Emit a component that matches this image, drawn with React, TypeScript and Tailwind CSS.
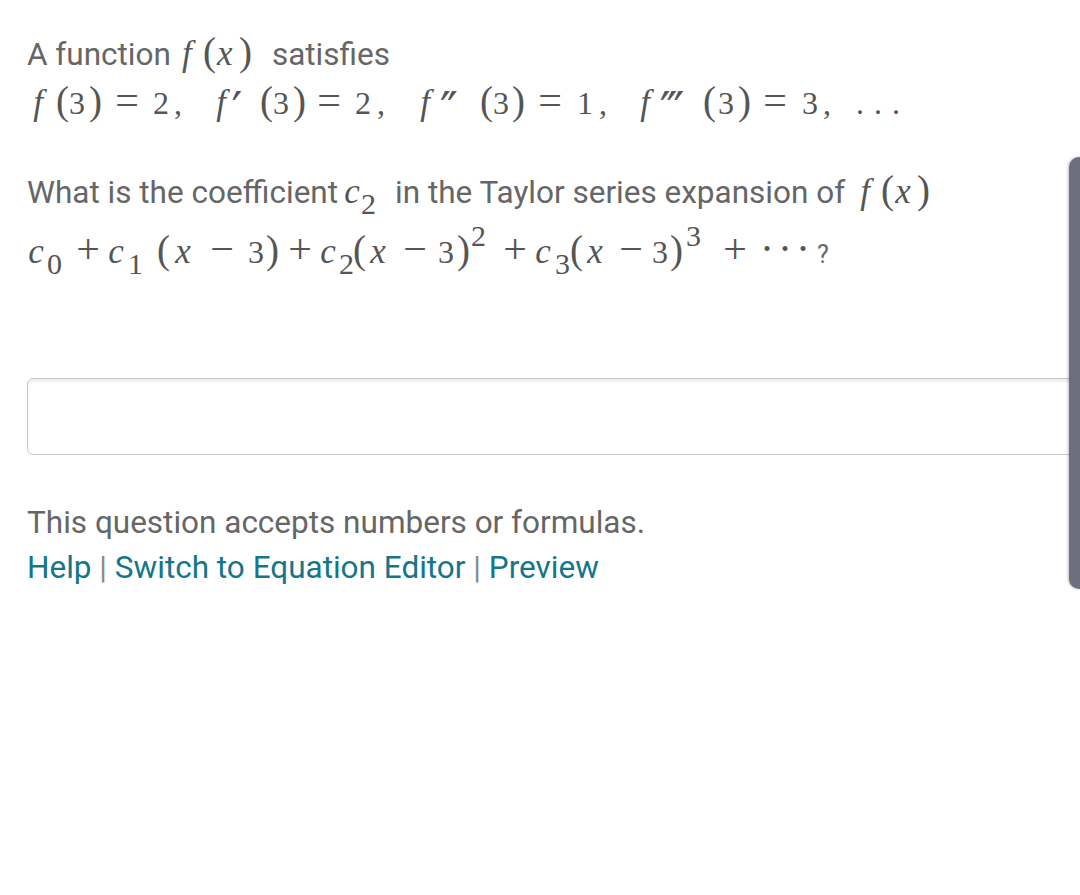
type Kind = 'v' | 'n' | 'pa' | 'o' | 'sub' | 'sup' | 'p' | 'q';

type Tok = { t: string; k: Kind; c: string };

const kindClass: Record<Kind, string> = {
  v: "italic font-['Liberation_Serif',serif] text-[35px] leading-[0px]",
  n: "font-['Liberation_Serif',serif] text-[32px]",
  pa: "font-['Liberation_Serif',serif] text-[39px] leading-[0px]",
  o: "font-['Liberation_Serif',serif] text-[42px] leading-[0px]",
  sub: "font-['Liberation_Serif',serif] text-[30px] relative top-[11px]",
  sup: "font-['Liberation_Serif',serif] text-[30px] relative top-[-17px]",
  p: "font-['DejaVu_Sans',sans-serif] text-[48px] leading-[0px] relative top-[12px] tracking-[-4px]",
  q: "font-['Roboto',sans-serif] text-[25px]",
};

function T({ tok }: { tok: Tok }) {
  return <span className={`inline-block text-center ${kindClass[tok.k]} ${tok.c}`}>{tok.t}</span>;
}

function Row({ toks }: { toks: Tok[] }) {
  return (
    <>
      {toks.map((tok, i) => (
        <T key={i} tok={tok} />
      ))}
    </>
  );
}

// f (3) = 2 , f′ (3) = 2 , f″ (3) = 1 , f‴ (3) = 3 , ...
const conditions: Tok[] = [
  { t: 'f', k: 'v', c: 'ml-[3px] w-[16px]' },
  { t: '(', k: 'pa', c: 'ml-[10px] w-[10px]' },
  { t: '3', k: 'n', c: 'ml-[3px] w-[16px]' },
  { t: ')', k: 'pa', c: 'ml-[4px] w-[10px]' },
  { t: '=', k: 'o', c: 'ml-[16px] w-[24px]' },
  { t: '2', k: 'n', c: 'ml-[14px] w-[16px]' },
  { t: ',', k: 'n', c: 'ml-[5px] w-[8px]' },
  { t: 'f', k: 'v', c: 'ml-[31px] w-[16px]' },
  { t: '′', k: 'p', c: 'ml-[1px] w-[10px]' },
  { t: '(', k: 'pa', c: 'ml-[20px] w-[10px]' },
  { t: '3', k: 'n', c: 'ml-[3px] w-[16px]' },
  { t: ')', k: 'pa', c: 'ml-[4px] w-[10px]' },
  { t: '=', k: 'o', c: 'ml-[14px] w-[24px]' },
  { t: '2', k: 'n', c: 'ml-[14px] w-[16px]' },
  { t: ',', k: 'n', c: 'ml-[6px] w-[8px]' },
  { t: 'f', k: 'v', c: 'ml-[32px] w-[16px]' },
  { t: '′′', k: 'p', c: 'ml-[4px] w-[20px]' },
  { t: '(', k: 'pa', c: 'ml-[23px] w-[10px]' },
  { t: '3', k: 'n', c: 'ml-[3px] w-[16px]' },
  { t: ')', k: 'pa', c: 'ml-[3px] w-[10px]' },
  { t: '=', k: 'o', c: 'ml-[16px] w-[24px]' },
  { t: '1', k: 'n', c: 'ml-[15px] w-[16px]' },
  { t: ',', k: 'n', c: 'ml-[6px] w-[8px]' },
  { t: 'f', k: 'v', c: 'ml-[30px] w-[16px]' },
  { t: '′′′', k: 'p', c: 'ml-[2px] w-[30px]' },
  { t: '(', k: 'pa', c: 'ml-[18px] w-[10px]' },
  { t: '3', k: 'n', c: 'ml-[5px] w-[16px]' },
  { t: ')', k: 'pa', c: 'ml-[4px] w-[10px]' },
  { t: '=', k: 'o', c: 'ml-[15px] w-[24px]' },
  { t: '3', k: 'n', c: 'ml-[15px] w-[16px]' },
  { t: ',', k: 'n', c: 'ml-[5px] w-[8px]' },
  { t: '. . .', k: 'n', c: 'ml-[25px] w-[40px] tracking-[1px]' },
];

// c0 + c1 (x − 3) + c2(x − 3)^2 + c3(x − 3)^3 + ··· ?
const series: Tok[] = [
  { t: 'c', k: 'v', c: 'ml-[1px] w-[16px]' },
  { t: '0', k: 'sub', c: 'ml-[3px] w-[14px]' },
  { t: '+', k: 'o', c: 'ml-[15px] w-[24px]' },
  { t: 'c', k: 'v', c: 'ml-[8px] w-[16px]' },
  { t: '1', k: 'sub', c: 'ml-[4px] w-[14px]' },
  { t: '(', k: 'pa', c: 'ml-[15px] w-[10px]' },
  { t: 'x', k: 'v', c: 'ml-[7px] w-[18px]' },
  { t: '−', k: 'o', c: 'ml-[18px] w-[24px]' },
  { t: '3', k: 'n', c: 'ml-[14px] w-[16px]' },
  { t: ')', k: 'pa', c: 'ml-[2px] w-[10px]' },
  { t: '+', k: 'o', c: 'ml-[12px] w-[24px]' },
  { t: 'c', k: 'v', c: 'ml-[8px] w-[16px]' },
  { t: '2', k: 'sub', c: 'ml-[3px] w-[14px]' },
  { t: '(', k: 'pa', c: 'ml-[0px] w-[10px]' },
  { t: 'x', k: 'v', c: 'ml-[6px] w-[18px]' },
  { t: '−', k: 'o', c: 'ml-[16px] w-[24px]' },
  { t: '3', k: 'n', c: 'ml-[11px] w-[16px]' },
  { t: ')', k: 'pa', c: 'ml-[3px] w-[10px]' },
  { t: '2', k: 'sup', c: 'ml-[4px] w-[14px]' },
  { t: '+', k: 'o', c: 'ml-[18px] w-[24px]' },
  { t: 'c', k: 'v', c: 'ml-[8px] w-[16px]' },
  { t: '3', k: 'sub', c: 'ml-[4px] w-[14px]' },
  { t: '(', k: 'pa', c: 'ml-[1px] w-[10px]' },
  { t: 'x', k: 'v', c: 'ml-[6px] w-[18px]' },
  { t: '−', k: 'o', c: 'ml-[15px] w-[24px]' },
  { t: '3', k: 'n', c: 'ml-[9px] w-[16px]' },
  { t: ')', k: 'pa', c: 'ml-[2px] w-[10px]' },
  { t: '3', k: 'sup', c: 'ml-[6px] w-[14px]' },
  { t: '+', k: 'o', c: 'ml-[23px] w-[24px]' },
  { t: '·', k: 'o', c: 'ml-[11px] w-[18px]' },
  { t: '·', k: 'o', c: 'w-[18px]' },
  { t: '·', k: 'o', c: 'w-[18px]' },
  { t: '?', k: 'q', c: 'ml-[4px] w-[14px] text-[#666666]' },
];

function Fx() {
  return (
    <>
      <T tok={{ t: 'f', k: 'v', c: 'w-[16px]' }} />
      <T tok={{ t: '(', k: 'pa', c: 'ml-[8px] w-[10px]' }} />
      <T tok={{ t: 'x', k: 'v', c: 'ml-[3px] w-[18px]' }} />
      <T tok={{ t: ')', k: 'pa', c: 'ml-[5px] w-[10px]' }} />
    </>
  );
}

function App() {
  return (
    <div className="relative min-h-screen bg-white overflow-hidden font-['Roboto',sans-serif] text-[#666666]">
      {/* side panel edge */}
      <div className="absolute right-0 top-[157px] h-[432px] w-[11px] rounded-l-[10px] bg-[#6f6e7e] shadow-[-1px_0_3px_rgba(0,0,0,0.25)]" />

      <div className="flex flex-col pl-[27px] pt-[31px]">
        <div className="h-[48px] whitespace-nowrap text-[31.5px] leading-[48px]">
          <span>A function</span>
          <span className="ml-[8px] text-[#555555]">
            <Fx />
          </span>
          <span className="ml-[23px]">satisfies</span>
        </div>
        <div className="h-[48px] whitespace-nowrap leading-[48px] text-[#555555]">
          <Row toks={conditions} />
        </div>

        <div className="mt-[42px] h-[48px] whitespace-nowrap text-[31.5px] leading-[48px]">
          <span>What is the coefficient</span>
          <span className="ml-[6px] text-[#555555]">
            <T tok={{ t: 'c', k: 'v', c: 'w-[16px]' }} />
            <T tok={{ t: '2', k: 'sub', c: 'ml-[1px] w-[14px] top-[9px]' }} />
          </span>
          <span className="ml-[20px]">in the Taylor series expansion of</span>
          <span className="ml-[12px] text-[#555555]">
            <Fx />
          </span>
        </div>
        <div className="h-[58px] whitespace-nowrap leading-[70px] text-[#555555]">
          <Row toks={series} />
        </div>

        <div className="mt-[103px] h-[77px] w-[1100px] shrink-0 rounded-[6px] border border-[#c8c8c8] bg-white shadow-[inset_0_3px_3px_rgba(0,0,0,0.07)]" />

        <p className="mt-[46px] text-[31.5px] leading-[44px]">This question accepts numbers or formulas.</p>
        <p className="text-[31.5px] leading-[46px] text-[#15768a]">
          <span>Help</span>
          <span className="text-[#8a8a8a]"> | </span>
          <span>Switch to Equation Editor</span>
          <span className="text-[#8a8a8a]"> | </span>
          <span>Preview</span>
        </p>
      </div>
    </div>
  );
}

export default App;
